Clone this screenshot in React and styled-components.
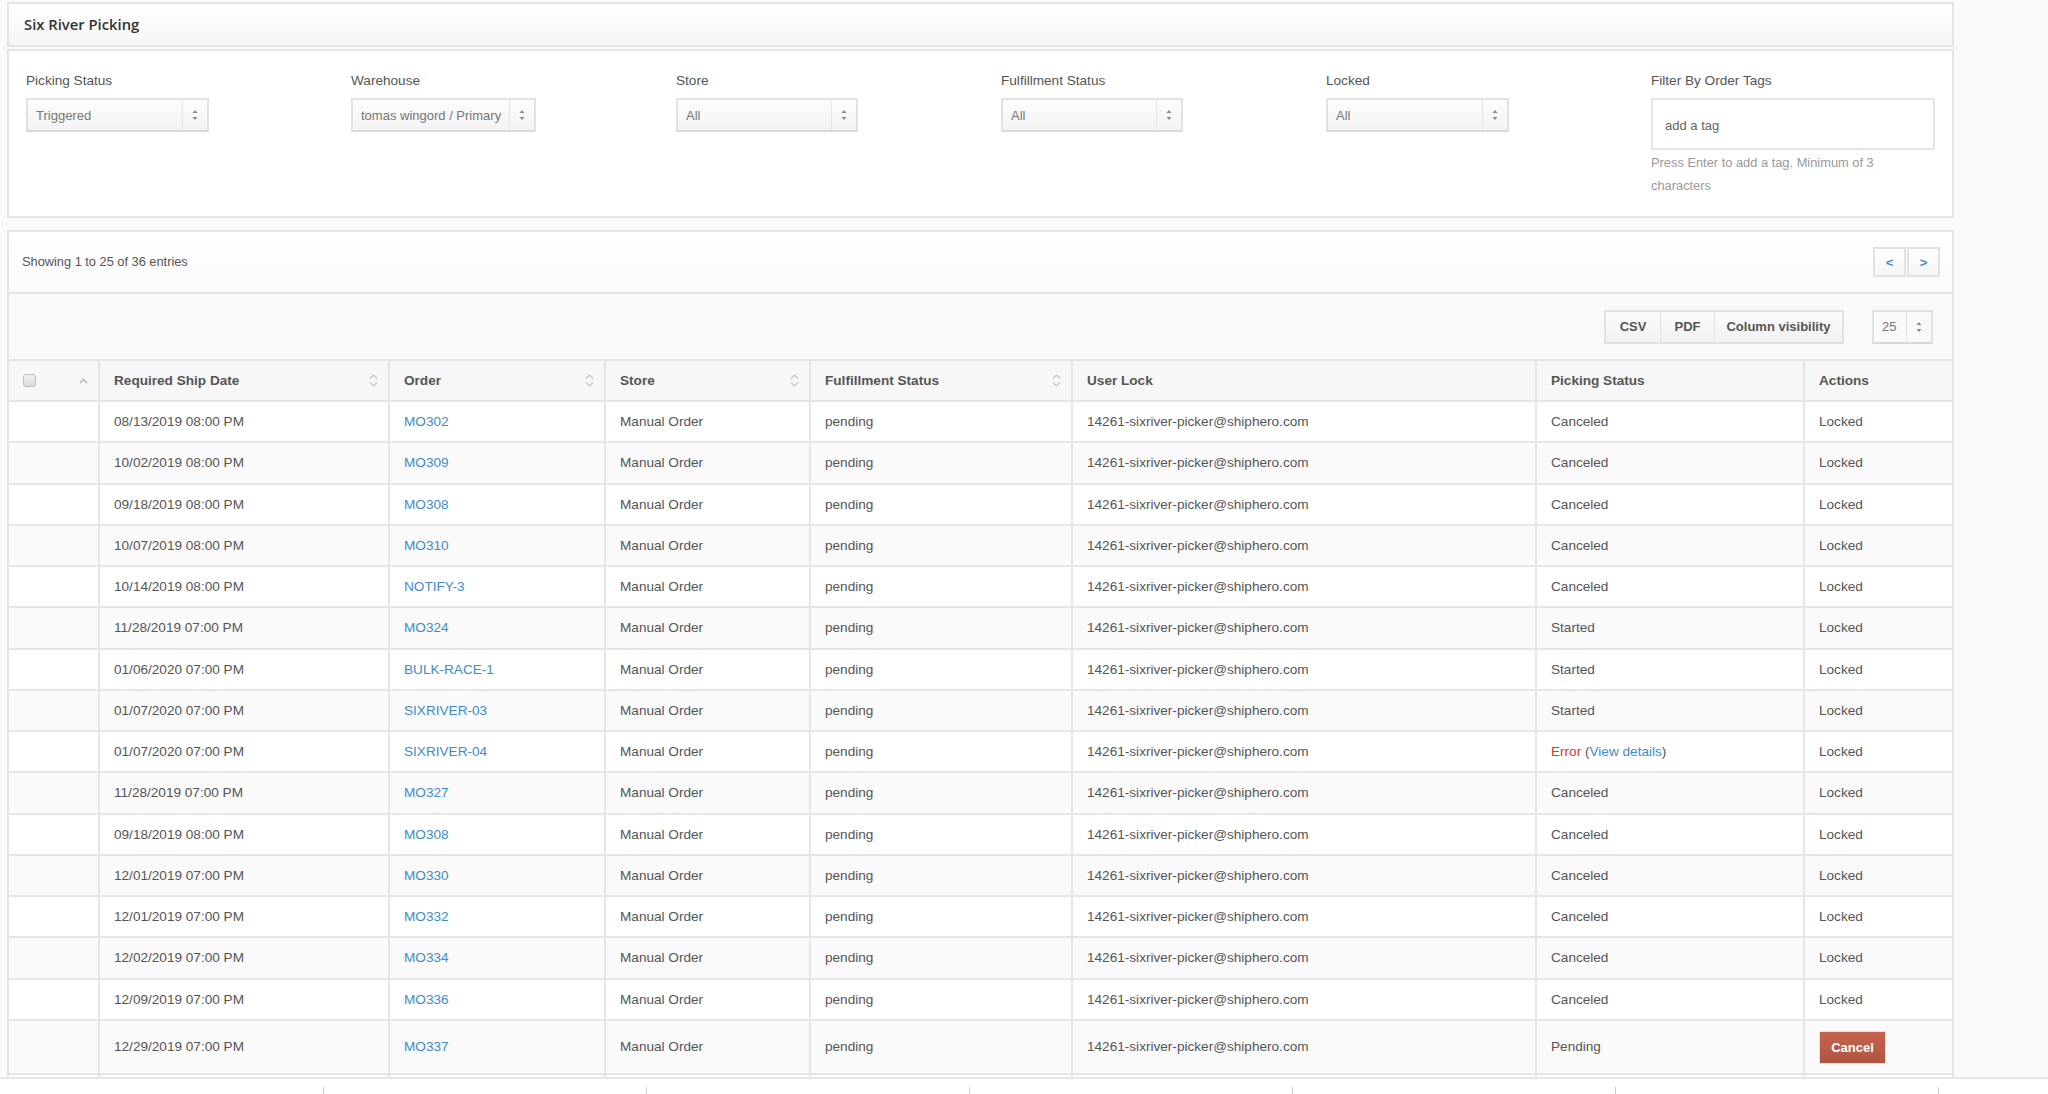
import React from 'react';
import styled, { createGlobalStyle } from 'styled-components';

const GlobalStyle = createGlobalStyle`
  *, *::before, *::after {
    box-sizing: border-box;
  }
  html, body {
    margin: 0;
    padding: 0;
    background: #fafafa;
  }
  body {
    font-family: "Liberation Sans", Arial, sans-serif;
    font-size: 13.6px;
    color: #555;
  }
`;

const Page = styled.div`
  width: 2048px;
  height: 1094px;
  display: flex;
  flex-direction: column;
  overflow: hidden;
  background: #fafafa;
`;

const Main = styled.div`
  flex: 1;
  min-height: 0;
  overflow: hidden;
  padding: 2px 94px 0 7px;
  display: flex;
  flex-direction: column;
`;

const Footer = styled.div`
  height: 17px;
  flex-shrink: 0;
  background: #fff;
  border-top: 2px solid #e6e6e6;
  display: grid;
  grid-template-columns: repeat(6, 323px);
  padding-top: 8px;
`;

const FooterTick = styled.div`
  border-right: 1px solid #ccc;
  margin-right: -1px;
`;

const TitleBar = styled.div`
  height: 45px;
  padding: 0 0 2px 15px;
  display: flex;
  align-items: center;
  border: 2px solid #e4e4e4;
  background: linear-gradient(#fff, #f5f5f5);
`;

const Title = styled.h1`
  margin: 0;
  font-family: "Open Sans", sans-serif;
  font-size: 14.8px;
  font-weight: 600;
  color: #333;
`;

const FilterPanel = styled.div`
  margin-top: 2px;
  height: 169px;
  padding: 20px 0 0 17px;
  border: 2px solid #e4e4e4;
  background: #fff;
  display: grid;
  grid-template-columns: repeat(6, 325px);
  align-content: start;
`;

const FilterLabel = styled.div`
  height: 19px;
  line-height: 19px;
  margin-bottom: 8px;
  color: #555;
`;

const SelectBox = styled.div`
  width: ${p => p.$width}px;
  height: 34px;
  display: flex;
  align-items: center;
  border: 2px solid #e2e2e2;
  border-bottom-color: #d8d8d8;
  background: linear-gradient(#fdfdfd, #f3f3f3);
  color: #777;
  font-size: 13px;
`;

const SelectValue = styled.div`
  flex: 1;
  padding-left: 8px;
  white-space: nowrap;
`;

const SelectArrow = styled.div`
  width: 25px;
  height: 100%;
  flex-shrink: 0;
  display: flex;
  align-items: center;
  justify-content: center;
  border-left: 1px solid #e6e6e6;
`;

const TagInput = styled.div`
  width: 284px;
  height: 52px;
  padding: 17px 0 0 12px;
  border: 2px solid #e4e4e4;
  background: #fff;
  color: #666;
  font-size: 13px;
  line-height: 18px;
`;

const HelpText = styled.div`
  width: 284px;
  margin-top: 1px;
  color: #999;
  font-size: 12.85px;
  line-height: 23px;
`;

const InfoPanel = styled.div`
  margin-top: 12px;
  display: flex;
  flex-direction: column;
  border: 2px solid #e4e4e4;
  border-bottom: 0;
  flex: 1;
  min-height: 0;
`;

const InfoBar = styled.div`
  height: 62px;
  flex-shrink: 0;
  padding: 0 12px 0 13px;
  display: flex;
  align-items: center;
  justify-content: space-between;
  background: linear-gradient(#fff, #fafafa);
  border-bottom: 2px solid #e4e4e4;
`;

const InfoText = styled.div`
  margin-top: -2px;
  font-size: 12.8px;
  color: #555;
`;

const Pager = styled.div`
  display: flex;
  gap: 1px;
`;

const PagerButton = styled.button`
  width: 33px;
  height: 30px;
  padding: 0;
  border: 2px solid #e2e2e2;
  background: linear-gradient(#fff, #f5f5f5);
  color: #428bca;
  font-family: inherit;
  font-size: 13px;
  font-weight: 700;
`;

const Toolbar = styled.div`
  height: 67px;
  flex-shrink: 0;
  padding: 0 19px 0 0;
  display: flex;
  align-items: center;
  justify-content: flex-end;
  gap: 28px;
  background: #f9f9f9;
  border-bottom: 2px solid #e4e4e4;
`;

const ButtonGroup = styled.div`
  display: flex;
  border: 2px solid #e2e2e2;
`;

const ToolButton = styled.button`
  width: ${p => p.$width}px;
  height: 30px;
  padding: 0;
  border: 0;
  border-left: ${p => (p.$first ? 0 : '1px solid #e2e2e2')};
  background: linear-gradient(#fbfbfb, #f2f2f2);
  color: #555;
  font-family: inherit;
  font-size: 13px;
  font-weight: 700;
`;

const LengthSelect = styled(SelectBox)`
  background: #f9f9f9;
`;

const Table = styled.table`
  width: 1943px;
  table-layout: fixed;
  border-collapse: collapse;
  flex-shrink: 0;
`;

const Th = styled.th`
  height: 40px;
  padding: 0 10px 0 14px;
  text-align: left;
  font-size: 13.6px;
  font-weight: 700;
  color: #555;
  background: #f7f7f7;
  border-right: 2px solid #e6e6e6;
  border-bottom: 2px solid #e6e6e6;
  &:last-child {
    border-right: 0;
  }
`;

const ThInner = styled.div`
  display: flex;
  align-items: center;
  justify-content: space-between;
  white-space: nowrap;
`;

const CheckBox = styled.span`
  display: block;
  width: 13px;
  height: 13px;
  border: 1px solid #bdbdbd;
  border-radius: 3px;
  background: linear-gradient(#f2f2f2, #dcdcdc);
`;

const Tr = styled.tr`
  height: ${p => (p.$tall ? 54 : 41.25)}px;
  background: ${p => (p.$odd ? '#fff' : '#fafafa')};
`;

const Td = styled.td`
  padding: 0 14px;
  color: #555;
  font-size: 13.6px;
  white-space: nowrap;
  border-right: 2px solid #e6e6e6;
  border-bottom: 2px solid #e6e6e6;
  &:last-child {
    border-right: 0;
  }
`;

const Link = styled.a`
  color: #428bca;
  text-decoration: none;
`;

const ErrorText = styled.span`
  color: #e2332b;
`;

const CancelButton = styled.button`
  display: block;
  width: 67px;
  height: 33px;
  margin-top: 2px;
  padding: 0;
  border: 1px solid #f3dcd7;
  background: linear-gradient(#c7644f, #ae5542);
  color: #fff;
  font-family: inherit;
  font-size: 13px;
  font-weight: 700;
`;

const Stepper = () => (
  <svg width="8" height="14" viewBox="0 0 8 14" fill="#8a8a8a">
    <path d="M4 2 L6.5 5 H1.5 Z" />
    <path d="M4 12 L6.5 9 H1.5 Z" />
  </svg>
);

const SortBoth = () => (
  <svg width="9" height="15" viewBox="0 0 9 15" fill="none" stroke="#c4c4c4" strokeWidth="1.2">
    <path d="M1 5.5 L4.5 2 L8 5.5" />
    <path d="M1 9.5 L4.5 13 L8 9.5" />
  </svg>
);

const SortUp = () => (
  <svg width="9" height="6" viewBox="0 0 9 6" fill="none" stroke="#b0b0b0" strokeWidth="1.4">
    <path d="M1 5 L4.5 1.5 L8 5" />
  </svg>
);

const filters = [
  { label: 'Picking Status', value: 'Triggered', width: 183 },
  { label: 'Warehouse', value: 'tomas wingord / Primary', width: 185 },
  { label: 'Store', value: 'All', width: 182 },
  { label: 'Fulfillment Status', value: 'All', width: 182 },
  { label: 'Locked', value: 'All', width: 183 },
];

const columns = [
  { label: 'Required Ship Date', sortable: true },
  { label: 'Order', sortable: true },
  { label: 'Store', sortable: true },
  { label: 'Fulfillment Status', sortable: true },
  { label: 'User Lock' },
  { label: 'Picking Status' },
  { label: 'Actions' },
];

const colWidths = [90, 290, 216, 205, 262, 464, 268, 148];

const rows = [
  ['08/13/2019 08:00 PM', 'MO302', 'Canceled'],
  ['10/02/2019 08:00 PM', 'MO309', 'Canceled'],
  ['09/18/2019 08:00 PM', 'MO308', 'Canceled'],
  ['10/07/2019 08:00 PM', 'MO310', 'Canceled'],
  ['10/14/2019 08:00 PM', 'NOTIFY-3', 'Canceled'],
  ['11/28/2019 07:00 PM', 'MO324', 'Started'],
  ['01/06/2020 07:00 PM', 'BULK-RACE-1', 'Started'],
  ['01/07/2020 07:00 PM', 'SIXRIVER-03', 'Started'],
  ['01/07/2020 07:00 PM', 'SIXRIVER-04', 'Error'],
  ['11/28/2019 07:00 PM', 'MO327', 'Canceled'],
  ['09/18/2019 08:00 PM', 'MO308', 'Canceled'],
  ['12/01/2019 07:00 PM', 'MO330', 'Canceled'],
  ['12/01/2019 07:00 PM', 'MO332', 'Canceled'],
  ['12/02/2019 07:00 PM', 'MO334', 'Canceled'],
  ['12/09/2019 07:00 PM', 'MO336', 'Canceled'],
  ['12/29/2019 07:00 PM', 'MO337', 'Pending'],
];

const App = () => (
  <Page>
    <GlobalStyle />
    <Main>
      <TitleBar>
        <Title>Six River Picking</Title>
      </TitleBar>

      <FilterPanel>
        {filters.map(f => (
          <div key={f.label}>
            <FilterLabel>{f.label}</FilterLabel>
            <SelectBox $width={f.width}>
              <SelectValue>{f.value}</SelectValue>
              <SelectArrow><Stepper /></SelectArrow>
            </SelectBox>
          </div>
        ))}
        <div>
          <FilterLabel>Filter By Order Tags</FilterLabel>
          <TagInput>add a tag</TagInput>
          <HelpText>Press Enter to add a tag. Minimum of 3 characters</HelpText>
        </div>
      </FilterPanel>

      <InfoPanel>
        <InfoBar>
          <InfoText>Showing 1 to 25 of 36 entries</InfoText>
          <Pager>
            <PagerButton>&lt;</PagerButton>
            <PagerButton>&gt;</PagerButton>
          </Pager>
        </InfoBar>

        <Toolbar>
          <ButtonGroup>
            <ToolButton $first $width={54}>CSV</ToolButton>
            <ToolButton $width={54}>PDF</ToolButton>
            <ToolButton $width={128}>Column visibility</ToolButton>
          </ButtonGroup>
          <LengthSelect $width={61}>
            <SelectValue>25</SelectValue>
            <SelectArrow><Stepper /></SelectArrow>
          </LengthSelect>
        </Toolbar>

        <Table>
          <colgroup>
            {colWidths.map((w, i) => <col key={i} width={w} />)}
          </colgroup>
          <thead>
            <tr>
              <Th>
                <ThInner>
                  <CheckBox />
                  <SortUp />
                </ThInner>
              </Th>
              {columns.map(c => (
                <Th key={c.label}>
                  <ThInner>
                    {c.label}
                    {c.sortable && <SortBoth />}
                  </ThInner>
                </Th>
              ))}
            </tr>
          </thead>
          <tbody>
            {rows.map(([date, order, status], i) => (
              <Tr key={i} $odd={i % 2 === 0} $tall={status === 'Pending'}>
                <Td />
                <Td>{date}</Td>
                <Td><Link href="#">{order}</Link></Td>
                <Td>Manual Order</Td>
                <Td>pending</Td>
                <Td>14261-sixriver-picker@shiphero.com</Td>
                <Td>
                  {status === 'Error' ? (
                    <>
                      <ErrorText>Error</ErrorText> (<Link href="#">View details</Link>)
                    </>
                  ) : status}
                </Td>
                <Td>
                  {status === 'Pending' ? <CancelButton>Cancel</CancelButton> : 'Locked'}
                </Td>
              </Tr>
            ))}
            <Tr $odd>
              {colWidths.map((w, i) => <Td key={i} />)}
            </Tr>
          </tbody>
        </Table>
      </InfoPanel>
    </Main>
    <Footer>
      {[0, 1, 2, 3, 4, 5].map(i => <FooterTick key={i} />)}
    </Footer>
  </Page>
);

export default App;
